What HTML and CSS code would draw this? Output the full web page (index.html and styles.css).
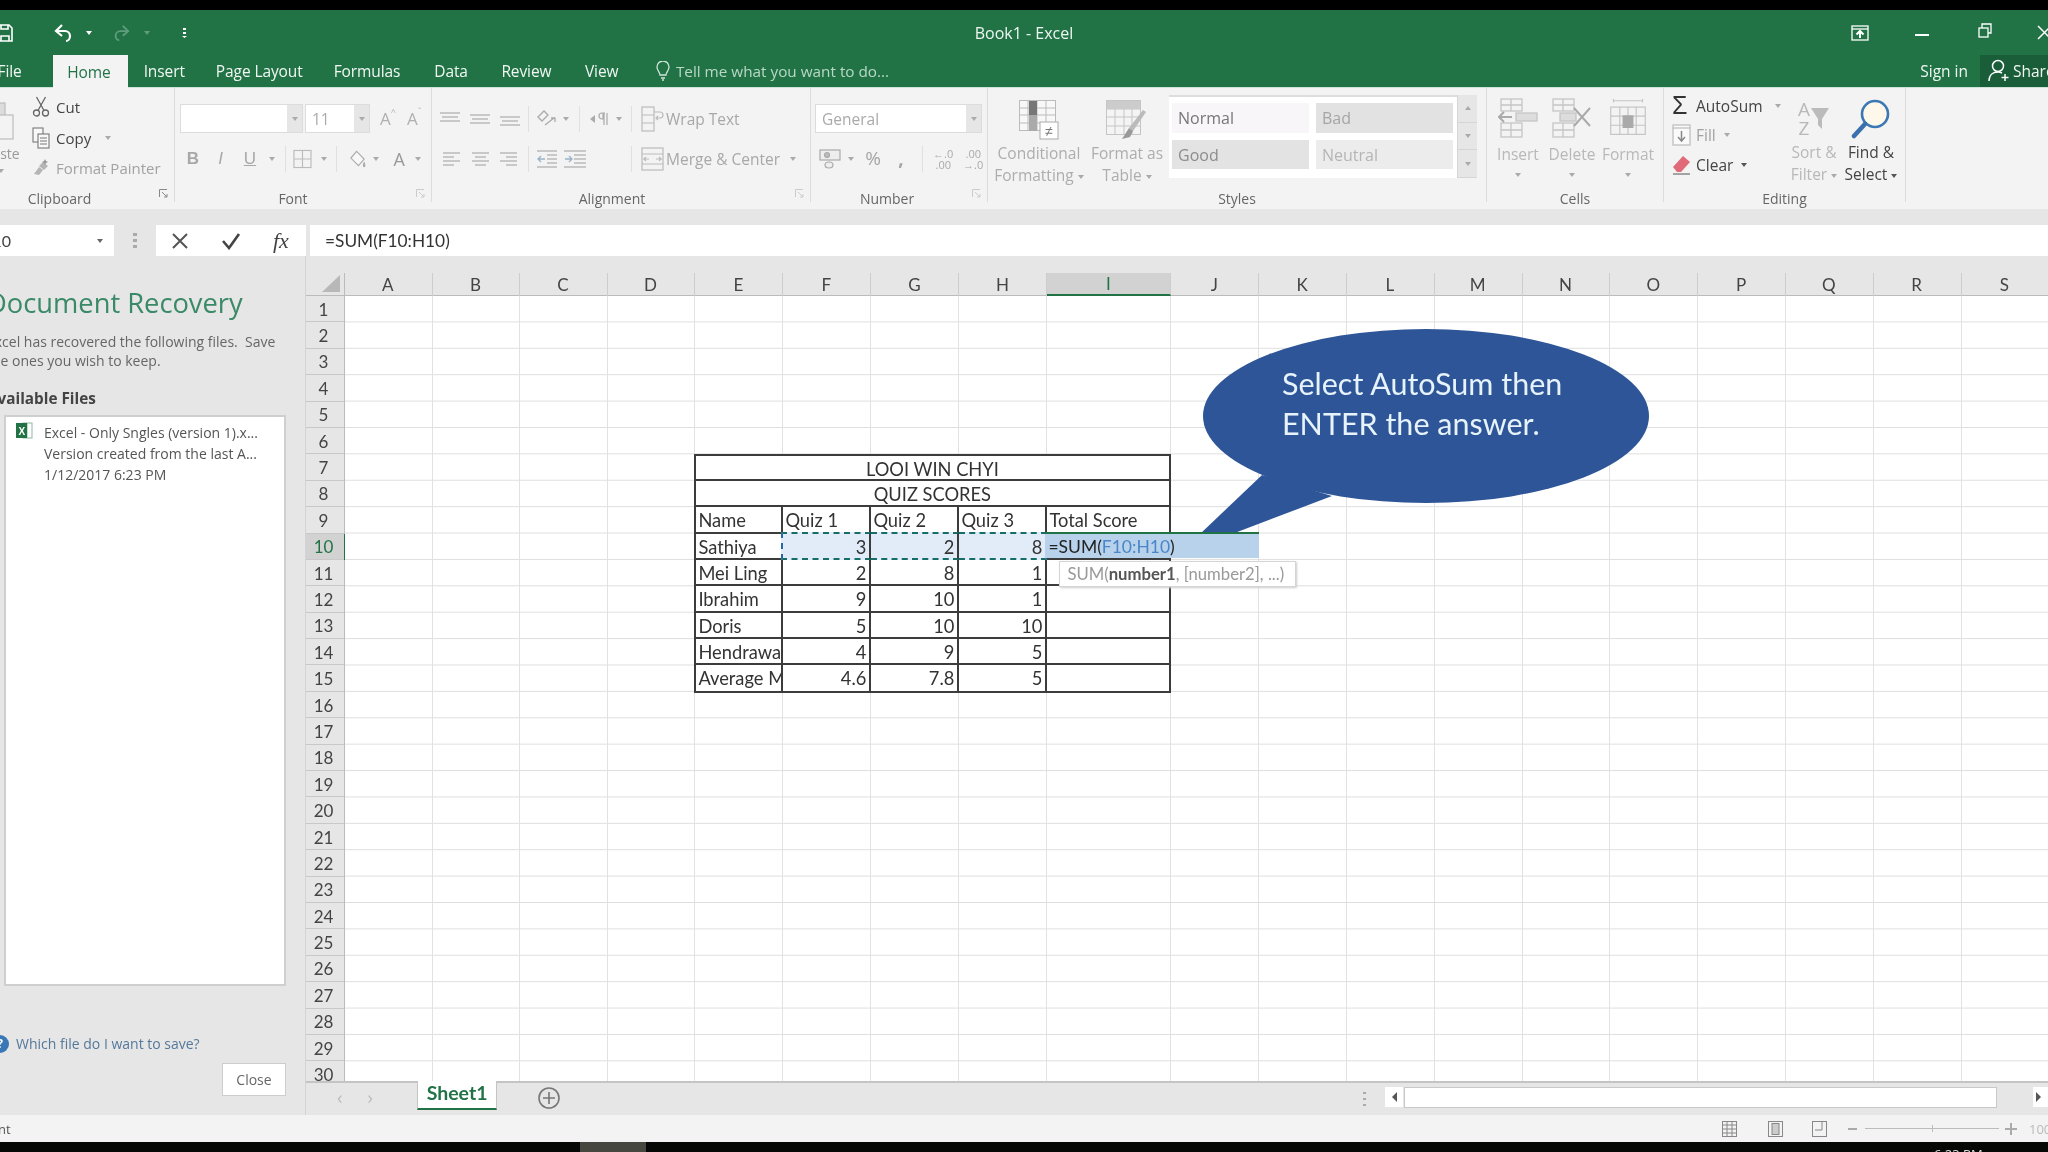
FILE: index.html
```html
<!DOCTYPE html>
<html lang="en">
<head>
<meta charset="utf-8">
<title>Book1 - Excel</title>
<link rel="stylesheet" href="styles.css">
</head>
<body>
<div class="app">
  <div class="black-top"></div>

  <header class="titlebar">
    <div class="qat">
      <svg class="q-save" width="16" height="18" viewBox="0 0 16 18" fill="none" stroke="#fff" stroke-width="1.6"><path d="M1 1h11l3 3v13H1z"/><path d="M4 17v-5h8v5" /><path d="M4 1v4h7V1"/></svg>
      <svg class="q-undo" width="20" height="20" viewBox="0 0 20 20" fill="none" stroke="#fff" stroke-width="2.2"><path d="M8 2 2 8l6 5"/><path d="M2 8h9a5 5 0 0 1 5 5c0 3-2 5-4 5"/></svg>
      <i class="caret white q-c1"></i>
      <svg class="q-redo" width="18" height="20" viewBox="0 0 20 20" fill="none" stroke="#5f9d7d" stroke-width="2"><path d="M12 2l6 6-6 5"/><path d="M18 8H9a5 5 0 0 0-5 5c0 3 2 5 4 5"/></svg>
      <i class="caret dim q-c2"></i>
      <svg class="q-more" width="6" height="10" viewBox="0 0 6 10" fill="#fff"><rect x="1" y="0" width="3" height="2"/><rect x="1" y="4" width="3" height="2"/><path d="M0 8h5l-2.500 2z"/></svg>
    </div>
    <div class="doc-title">Book1 - Excel</div>
    <div class="winctl">
      <svg class="w-ribbon" width="18" height="16" viewBox="0 0 18 16" fill="none" stroke="#fff" stroke-width="1.300"><rect x="1" y="1" width="16" height="14"/><path d="M1 4h16"/><path d="M9 13V6M5.500 9.500 9 6l3.500 3.500" stroke-width="2"/></svg>
      <span class="w-min"></span>
      <svg class="w-rest" width="14" height="15" viewBox="0 0 14 15" fill="none" stroke="#fff" stroke-width="1.300"><rect x="1" y="5" width="9" height="9"/><path d="M4 5V1h9v9h-3"/></svg>
      <svg class="w-close" width="15" height="15" viewBox="0 0 15 15" fill="none" stroke="#fff" stroke-width="1.500"><path d="M1 1l13 13M14 1 1 14"/></svg>
    </div>
  </header>

  <nav class="tabstrip">
    <span class="tab file">File</span>
    <span class="tab home">Home</span>
    <span class="tab">Insert</span>
    <span class="tab t-pl">Page Layout</span>
    <span class="tab t-fm">Formulas</span>
    <span class="tab t-dr">Data</span>
    <span class="tab t-dr">Review</span>
    <span class="tab">View</span>
    <span class="tell">
      <svg width="14" height="20" viewBox="0 0 14 20" fill="none" stroke="#cfe5d8" stroke-width="1.300"><path d="M4 14c0-3-3-4-3-8a6 6 0 0 1 12 0c0 4-3 5-3 8z"/><path d="M5 17h4M6 19h2"/></svg>
      Tell me what you want to do...
    </span>
    <span class="signin">Sign in</span>
    <span class="share">
      <svg width="22" height="24" viewBox="0 0 22 24" fill="none" stroke="#fff" stroke-width="1.500"><circle cx="10" cy="7" r="5.500"/><path d="M1 22c0-6 4-9 9-9 2 0 3 .5 4 1"/><path d="M17 15v7M13.500 18.500h7"/></svg>
      Share
    </span>
  </nav>

  <section class="ribbon">
    <div class="group g-clip">
      <div class="gbody clip-body">
        <div class="paste">
          <svg width="30" height="42" viewBox="0 0 30 42" fill="#f3f3f3" stroke="#bdbdbd" stroke-width="1.200"><rect x="1" y="4" width="20" height="28" fill="#dcdcdc"/><path d="M8 2h6v4H8z" fill="#c9c9c9"/><rect x="11" y="16" width="18" height="24"/></svg>
          <span class="paste-l">Paste</span>
          <i class="caret paste-c"></i>
        </div>
        <div class="clip-list">
          <div class="clip-row">
            <svg width="18" height="22" viewBox="0 0 18 22" fill="none" stroke="#666" stroke-width="1.300"><circle cx="4.500" cy="17" r="3"/><circle cx="13.500" cy="17" r="3"/><path d="M6 14.500 13.500 1M12 14.500 4.500 1"/></svg>
            <span class="t-dark">Cut</span>
          </div>
          <div class="clip-row">
            <svg width="18" height="22" viewBox="0 0 18 22" fill="#f8f8f8" stroke="#777" stroke-width="1.100"><rect x="1" y="1" width="10" height="14"/><rect x="6" y="7" width="11" height="14"/><path d="M8 11h7M8 14h7M8 17h7"/></svg>
            <span class="t-dark">Copy</span>
            <i class="caret copy-c"></i>
          </div>
          <div class="clip-row">
            <svg width="18" height="18" viewBox="0 0 18 18" fill="#b5b5b5"><path d="M11 3l5 4-4 4-5-4z"/><path d="M7 8l4 3-4 5-5-1z"/><path d="M13 0l1 2 2 1-2 1-1 2-1-2-2-1 2-1z" fill="#999"/></svg>
            <span class="t-dim">Format Painter</span>
          </div>
        </div>
      </div>
      <div class="glabel">Clipboard</div>
      <svg class="launch dark" width="9" height="9" viewBox="0 0 9 9" fill="none" stroke="#888"><path d="M.5 8V.5H8M3 3l5 5M8 5v3H5"/></svg>
    </div>

    <div class="group g-font">
      <div class="gbody">
        <div class="rrow first">
          <span class="combo c-font"><i class="combo-arrow"><i class="caret"></i></i></span>
          <span class="combo c-size"><span class="combo-val">11</span><i class="combo-arrow"><i class="caret"></i></i></span>
          <span class="bigA a1">A<sup>^</sup></span>
          <span class="bigA a2">A<sup>ˇ</sup></span>
        </div>
        <div class="rrow">
          <b class="fmt w26">B</b>
          <em class="fmt w29">I</em>
          <span class="fmt w30 under">U</span>
          <span class="cb w14"><i class="caret"></i></span>
          <i class="sep ml6"></i>
          <svg class="ml7" width="20" height="20" viewBox="0 0 20 20" fill="none" stroke="#bbb" stroke-width="1.200"><rect x="1" y="1" width="18" height="18"/><path d="M10 1v18M1 10h18"/></svg>
          <span class="cb w24"><i class="caret"></i></span>
          <i class="sep"></i>
          <svg class="ml12" width="18" height="20" viewBox="0 0 18 20" fill="#f8f8f8" stroke="#aaa" stroke-width="1.200"><path d="M8 2l8 8-6 7-8-8z"/><path d="M16 14c1 2 1 4 0 4s-1-2 0-4z" fill="#ccc"/></svg>
          <span class="cb w20"><i class="caret"></i></span>
          <span class="fontA w19">A</span>
          <span class="cb w26"><i class="caret"></i></span>
        </div>
      </div>
      <div class="glabel pad-launch">Font</div>
      <svg class="launch" width="9" height="9" viewBox="0 0 9 9" fill="none" stroke="#ccc"><path d="M.5 8V.5H8M3 3l5 5M8 5v3H5"/></svg>
    </div>

    <div class="group g-align">
      <div class="gbody">
        <div class="rrow first">
          <svg class="al" width="22" height="14" viewBox="0 0 22 14"><path d="M1 1h20M3 5h16M1 9h20" stroke="#bbb" stroke-width="1.500"/></svg>
          <svg class="al ml8" width="22" height="16" viewBox="0 0 22 16"><path d="M1 4h20M3 8h16M1 12h20" stroke="#bbb" stroke-width="1.500"/></svg>
          <svg class="al ml8" width="22" height="18" viewBox="0 0 22 18"><path d="M1 7h20M3 11h16M1 15h20" stroke="#bbb" stroke-width="1.500"/></svg>
          <i class="sep ml7"></i>
          <svg class="ml7" width="21" height="20" viewBox="0 0 21 20" fill="none" stroke="#aaa" stroke-width="1.300"><path d="M2 8l6-6 4 4-6 6zM9 16l9-7M15 9h4v4"/></svg>
          <span class="cb w18"><i class="caret"></i></span>
          <i class="sep ml4"></i>
          <svg class="ml9" width="22" height="14" viewBox="0 0 22 14" fill="#aaa"><path d="M1 7l5-4v8z"/><path d="M16 1h-3a3 3 0 0 0 0 6h1V1zM15 1v12M18 1v12" stroke="#aaa" stroke-width="1.200" fill="none"/></svg>
          <span class="cb w16"><i class="caret"></i></span>
          <i class="sep ml4"></i>
          <svg class="ml9" width="23" height="26" viewBox="0 0 23 26" fill="none" stroke="#bbb" stroke-width="1.200"><rect x="1" y="1" width="12" height="24"/><path d="M1 9h12M1 17h12M13 6h6a3 3 0 0 1 0 6h-4M17 10l-2 2 2 2"/></svg>
          <span class="t-mid ml2">Wrap Text</span>
        </div>
        <div class="rrow">
          <svg class="ml4" width="17" height="14" viewBox="0 0 17 14"><path d="M0 1h17M0 5h11M0 9h17M0 13h11" stroke="#bbb" stroke-width="1.400"/></svg>
          <svg class="ml12" width="17" height="14" viewBox="0 0 17 14"><path d="M0 1h17M3 5h11M0 9h17M3 13h11" stroke="#bbb" stroke-width="1.400"/></svg>
          <svg class="ml11" width="17" height="14" viewBox="0 0 17 14"><path d="M0 1h17M6 5h11M0 9h17M6 13h11" stroke="#bbb" stroke-width="1.400"/></svg>
          <i class="sep ml11"></i>
          <svg class="ml8" width="20" height="18" viewBox="0 0 20 18" fill="none"><path d="M0 1h20M10 5h10M10 9h10M10 13h10M0 17h20" stroke="#bbb" stroke-width="1.300"/><path d="M8 9H1M4 6 1 9l3 3" stroke="#9cb4c8" stroke-width="1.400"/></svg>
          <svg class="ml7" width="22" height="18" viewBox="0 0 22 18" fill="none"><path d="M0 1h22M10 5h12M10 9h12M10 13h12M0 17h22" stroke="#bbb" stroke-width="1.300"/><path d="M1 9h7M5 6l3 3-3 3" stroke="#9cb4c8" stroke-width="1.400"/></svg>
          <i class="sep ml45"></i>
          <svg class="ml9" width="23" height="24" viewBox="0 0 23 24" fill="none" stroke="#bbb" stroke-width="1.200"><rect x="1" y="1" width="21" height="22"/><path d="M1 7h21M1 17h21M8 12H2M15 12h6M5 10l-2 2 2 2M18 10l2 2-2 2"/></svg>
          <span class="t-mid ml2">Merge &amp; Center</span>
          <i class="caret ml10"></i>
        </div>
      </div>
      <div class="glabel pad-launch">Alignment</div>
      <svg class="launch" width="9" height="9" viewBox="0 0 9 9" fill="none" stroke="#ccc"><path d="M.5 8V.5H8M3 3l5 5M8 5v3H5"/></svg>
    </div>

    <div class="group g-num">
      <div class="gbody">
        <div class="rrow first">
          <span class="combo c-num"><span class="combo-val dim">General</span><i class="combo-arrow"><i class="caret"></i></i></span>
        </div>
        <div class="rrow">
          <svg class="ml8" width="22" height="22" viewBox="0 0 22 22" fill="#eee" stroke="#aaa" stroke-width="1.200"><rect x="1" y="2" width="20" height="10"/><circle cx="8" cy="7" r="2.500" fill="#bbb"/><ellipse cx="10" cy="17" rx="4" ry="3"/></svg>
          <span class="cb w20"><i class="caret"></i></span>
          <span class="sym ml2 w20">%</span>
          <span class="sym w36 bold">,</span>
          <i class="sep ml3"></i>
          <span class="dec ml10"><span>←.0</span><span>.00</span></span>
          <span class="dec ml12"><span>.00</span><span>→.0</span></span>
        </div>
      </div>
      <div class="glabel pad-launch2">Number</div>
      <svg class="launch" width="9" height="9" viewBox="0 0 9 9" fill="none" stroke="#ccc"><path d="M.5 8V.5H8M3 3l5 5M8 5v3H5"/></svg>
    </div>

    <div class="group g-styles">
      <div class="gbody styles-body">
        <div class="big w96">
          <svg width="40" height="40" viewBox="0 0 40 40" fill="none" stroke="#bbb"><rect x=".5" y=".5" width="36" height="30" fill="#f8f8f8"/><path d="M9 .5v30M18 .5v30M27 .5v30M.5 8h36M.5 15h36M.5 23h36"/><rect x="10" y="1" width="8" height="14" fill="#777" stroke="none"/><rect x="10" y="15" width="8" height="16" fill="#aaa" stroke="none"/><rect x="21" y="22" width="18" height="17" fill="#fff" stroke="#aaa"/><text x="30" y="36" class="ne">≠</text></svg>
          <span class="t-dim2">Conditional</span>
          <span class="t-dim2">Formatting <i class="caret"></i></span>
        </div>
        <div class="big w80">
          <svg width="42" height="40" viewBox="0 0 42 40" fill="none" stroke="#c5c5c5"><rect x=".5" y=".5" width="34" height="34" fill="#f4f4f4"/><path d="M9 .5v34M18 .5v34M26 .5v34M.5 9h34M.5 17h34M.5 26h34"/><rect x="1" y="1" width="33" height="8" fill="#ccc" stroke="none"/><path d="M40 12 27 31l-4-3L37 10z" fill="#bbb" stroke="none"/><path d="M23 28l4 3-3 6-8 2z" fill="#999" stroke="none"/></svg>
          <span class="t-dim2">Format as</span>
          <span class="t-dim2">Table <i class="caret"></i></span>
        </div>
        <div class="gallery">
          <div class="gal-grid">
            <span class="st st-normal">Normal</span>
            <span class="st st-bad">Bad</span>
            <span class="st st-good">Good</span>
            <span class="st st-neutral">Neutral</span>
          </div>
          <div class="gal-scroll">
            <span><i class="caret up"></i></span>
            <span><i class="caret"></i></span>
            <span><i class="caret"></i></span>
          </div>
        </div>
      </div>
      <div class="glabel">Styles</div>
    </div>

    <div class="group g-cells">
      <div class="gbody cells-body">
        <div class="big cell-btn w58">
          <svg width="40" height="40" viewBox="0 0 40 40" fill="none" stroke="#c5c5c5" stroke-width="1.300"><rect x="3" y="1" width="21" height="12"/><path d="M13 1v12M3 7h21"/><rect x="3" y="25" width="21" height="14"/><path d="M13 25v14M3 32h21"/><rect x="18" y="15" width="21" height="8" fill="#ddd"/><path d="M14 19H1M6 14 1 19l5 5" stroke="#aaa" stroke-width="2"/></svg>
          <span class="t-dim3">Insert</span>
          <i class="caret big-c"></i>
        </div>
        <div class="big cell-btn w50">
          <svg width="40" height="40" viewBox="0 0 40 40" fill="none" stroke="#c5c5c5" stroke-width="1.300"><rect x="1" y="1" width="21" height="12"/><path d="M11 1v12M1 7h21"/><rect x="1" y="25" width="21" height="14"/><path d="M11 25v14M1 32h21"/><rect x="8" y="15" width="16" height="8" fill="#ddd"/><path d="M22 10l16 18M38 10 22 28" stroke="#aaa" stroke-width="2"/></svg>
          <span class="t-dim3">Delete</span>
          <i class="caret big-c"></i>
        </div>
        <div class="big cell-btn w62">
          <svg width="40" height="40" viewBox="0 0 40 44" fill="none" stroke="#c5c5c5" stroke-width="1.300"><rect x="1" y="10" width="38" height="30"/><path d="M11 10v30M20 10v30M29 10v30M1 20h38M1 30h38M4 3h32M4 1v4M36 1v4"/><rect x="14" y="19" width="12" height="14" fill="#aaa" stroke="none"/></svg>
          <span class="t-dim3">Format</span>
          <i class="caret big-c"></i>
        </div>
      </div>
      <div class="glabel">Cells</div>
    </div>

    <div class="group g-edit">
      <div class="gbody edit-body">
        <div class="edit-list">
          <div class="edit-row"><span class="sigma">Σ</span><span class="t-dark ed-t">AutoSum</span><i class="caret c-auto"></i></div>
          <div class="edit-row">
            <svg width="19" height="22" viewBox="0 0 19 22" fill="#fafafa" stroke="#bbb" stroke-width="1.200"><rect x="1" y="1" width="17" height="20"/><path d="M1 4h17"/><path d="M9.500 7v10M6 13l3.500 4 3.500-4" stroke="#888" stroke-width="1.500" fill="none"/></svg>
            <span class="t-dim ed-t2">Fill</span><i class="caret c-fill"></i>
          </div>
          <div class="edit-row">
            <svg width="19" height="20" viewBox="0 0 19 20"><path d="M1 12 11 1l7 6-9 10H5z" fill="#e06a78"/><path d="M1 19h17" stroke="#777" stroke-width="1.300"/></svg>
            <span class="t-dark ed-t2">Clear</span><i class="caret c-clear"></i>
          </div>
        </div>
        <div class="big w56 sort">
          <span class="sort-ic"><span class="az">A<br>Z</span><svg width="20" height="24" viewBox="0 0 20 24" fill="#bbb"><path d="M1 1h18l-7 11v10l-4-4v-6z"/></svg></span>
          <span class="t-dim3">Sort &amp;</span>
          <span class="t-dim3">Filter <i class="caret"></i></span>
        </div>
        <div class="big w58 find">
          <svg width="42" height="40" viewBox="0 0 42 40" fill="none"><circle cx="25" cy="15" r="13" fill="#fdf8ea" stroke="#3c78b4" stroke-width="2.600"/><path d="M15 25 4 37" stroke="#3a70ad" stroke-width="4.500" stroke-linecap="round"/></svg>
          <span class="t-dark">Find &amp;</span>
          <span class="t-dark">Select <i class="caret"></i></span>
        </div>
      </div>
      <div class="glabel">Editing</div>
    </div>
  </section>

  <section class="formulabar">
    <div class="namebox"><span class="nb-val">I10</span><i class="caret nb-c"></i></div>
    <svg class="fb-dots" width="4" height="16" viewBox="0 0 4 16" fill="#aaa"><rect width="4" height="3"/><rect y="6" width="4" height="3"/><rect y="12" width="4" height="3"/></svg>
    <div class="fb-btns">
      <svg width="18" height="18" viewBox="0 0 18 18" fill="none" stroke="#555" stroke-width="2"><path d="M2 2l14 14M16 2 2 16"/></svg>
      <svg width="20" height="18" viewBox="0 0 20 18" fill="none" stroke="#444" stroke-width="2.600"><path d="M2 9l6 7L18 2"/></svg>
      <span class="fx">fx</span>
    </div>
    <div class="fb-input">=SUM(F10:H10)</div>
  </section>

  <main class="main">
    <aside class="panel">
      <h2 class="p-title">Document Recovery</h2>
      <p class="p-desc">Excel has recovered the following files.  Save<br>the ones you wish to keep.</p>
      <h3 class="p-avail">Available Files</h3>
      <div class="p-list">
        <svg width="17" height="17" viewBox="0 0 17 17"><rect x="7" y="1" width="9" height="15" fill="#fff" stroke="#8fb9a3"/><path d="M11 1v15" stroke="#8fb9a3"/><rect x="0" y="1" width="11" height="15" fill="#217346"/><text x="2.500" y="12.500" class="xl">X</text></svg>
        <div class="p-file">
          <span>Excel - Only Sngles (version 1).x...</span>
          <span>Version created from the last A...</span>
          <span>1/12/2017 6:23 PM</span>
        </div>
      </div>
      <div class="p-help"><span class="help-ic">?</span><span>Which file do I want to save?</span></div>
      <button class="p-close">Close</button>
    </aside>

    <section class="sheet">
      <div class="colhead">
        <div class="corner"><svg width="18" height="17" viewBox="0 0 18 17" fill="#b8b8b8"><path d="M18 0v17H0z"/></svg></div>
        <div class="cols">
          <span>A</span><span>B</span><span>C</span><span>D</span><span>E</span><span>F</span><span>G</span><span>H</span><span class="sel">I</span><span>J</span><span>K</span><span>L</span><span>M</span><span>N</span><span>O</span><span>P</span><span>Q</span><span>R</span><span>S</span>
        </div>
      </div>
      <div class="gridwrap">
        <div class="rowhead">
          <span>1</span><span>2</span><span>3</span><span>4</span><span>5</span><span>6</span><span>7</span><span>8</span><span>9</span><span class="sel">10</span><span>11</span><span>12</span><span>13</span><span>14</span><span>15</span><span>16</span><span>17</span><span>18</span><span>19</span><span>20</span><span>21</span><span>22</span><span>23</span><span>24</span><span>25</span><span>26</span><span>27</span><span>28</span><span>29</span><span>30</span>
        </div>
        <div class="cells">
          <div class="vlines"><i></i><i></i><i></i><i></i><i></i><i></i><i></i><i></i><i></i><i></i><i></i><i></i><i></i><i></i><i></i><i></i><i></i><i></i><i></i></div>
          <div class="data">
            <div class="c merged">LOOI WIN CHYI</div>
            <div class="c merged">QUIZ SCORES</div>
            <div class="c">Name</div><div class="c">Quiz 1</div><div class="c">Quiz 2</div><div class="c">Quiz 3</div><div class="c">Total Score</div>
            <div class="c">Sathiya</div><div class="c n ant al-l">3</div><div class="c n ant">2</div><div class="c n ant al-r">8</div>
            <div class="c active">
              <div class="edit">=SUM(<span class="ref">F10:H10</span>)</div>
              <div class="tip">SUM(<b>number1</b>, [number2], ...)</div>
            </div>
            <div class="c">Mei Ling</div><div class="c n">2</div><div class="c n">8</div><div class="c n">1</div><div class="c"></div>
            <div class="c">Ibrahim</div><div class="c n">9</div><div class="c n">10</div><div class="c n">1</div><div class="c"></div>
            <div class="c">Doris</div><div class="c n">5</div><div class="c n">10</div><div class="c n">10</div><div class="c"></div>
            <div class="c clip">Hendrawati</div><div class="c n">4</div><div class="c n">9</div><div class="c n">5</div><div class="c"></div>
            <div class="c clip">Average Mark</div><div class="c n">4.6</div><div class="c n">7.8</div><div class="c n">5</div><div class="c"></div>
          </div>
          <div class="callout">
            <svg width="450" height="205" viewBox="0 0 450 205"><ellipse cx="226" cy="87" rx="223" ry="87" fill="#2e5597"/><path d="M62 146 0 205h32l100-38z" fill="#2e5597"/></svg>
            <div class="callout-text">Select AutoSum then<br>ENTER the answer.</div>
          </div>
        </div>
      </div>
      <div class="sheettabs">
        <span class="nav">‹</span><span class="nav n2">›</span>
        <span class="sheet1">Sheet1</span>
        <svg class="addsheet" width="22" height="22" viewBox="0 0 22 22" fill="none" stroke="#777" stroke-width="1.600"><circle cx="11" cy="11" r="10"/><path d="M11 5v12M5 11h12"/></svg>
        <svg class="tdots" width="3" height="14" viewBox="0 0 3 14" fill="#aaa"><rect width="3" height="2"/><rect y="6" width="3" height="2"/><rect y="12" width="3" height="2"/></svg>
        <span class="sb-btn"><i class="tri-l"></i></span>
        <span class="sb-track"></span>
        <span class="sb-btn right"><i class="tri-r"></i></span>
      </div>
    </section>
  </main>

  <footer class="status">
    <span class="st-mode">Point</span>
    <svg class="s1" width="15" height="16" viewBox="0 0 15 16" fill="none" stroke="#888"><rect x=".5" y=".5" width="14" height="15"/><path d="M5 .5v15M10 .5v15M.5 4h14M.5 8h14M.5 12h14"/></svg>
    <svg class="s2" width="15" height="16" viewBox="0 0 15 16" fill="none" stroke="#888"><rect x=".5" y=".5" width="14" height="15"/><rect x="4" y="2.500" width="7" height="11" fill="#ccc"/></svg>
    <svg class="s3" width="15" height="16" viewBox="0 0 15 16" fill="none" stroke="#888"><rect x=".5" y=".5" width="14" height="15"/><path d="M10 .5V9H3"/></svg>
    <i class="z-minus"></i>
    <i class="z-track"><i class="z-tick"></i></i>
    <i class="z-plus"></i>
    <span class="z-val">100%</span>
  </footer>

  <div class="black-bot"><span class="tb-item"></span><span class="tb-time">6:23 PM</span></div>
</div>
</body>
</html>
```

FILE: styles.css
```css
* { box-sizing: border-box; }
html, body { margin: 0; padding: 0; width: 2048px; height: 1152px; overflow: hidden; background: #000; }
body { font-family: "Open Sans", "Noto Sans", sans-serif; color: #444; }
.app { width: 2048px; height: 1152px; display: flex; flex-direction: column; overflow: hidden; filter: blur(.35px); }
.black-top { height: 10px; background: #000; flex: none; }

/* carets */
.caret { display: inline-block; width: 0; height: 0; border-left: 3px solid transparent; border-right: 3px solid transparent; border-top: 4px solid #aaa; vertical-align: middle; flex: none; }
.caret.white { border-top-color: #fff; }
.caret.dim { border-top-color: #5f9d7d; }
.caret.up { border-top: 0; border-bottom: 4px solid #aaa; }

/* title */
.titlebar { height: 45px; flex: none; background: #217346; display: flex; align-items: center; color: #fff; }
.qat { flex: 1 1 0; min-width: 0; display: flex; align-items: center; }
.q-save { margin-left: -3px; flex: none; }
.q-undo { margin-left: 41px; flex: none; }
.q-c1 { margin-left: 12px; }
.q-redo { margin-left: 20px; flex: none; }
.q-c2 { margin-left: 14px; }
.q-more { margin-left: 32px; flex: none; }
.doc-title { font-size: 16px; color: #eef6f1; flex: none; }
.winctl { flex: 1 1 0; min-width: 0; display: flex; align-items: center; height: 100%; }
.winctl svg, .winctl span { flex: none; }
.w-ribbon { margin-left: 778px; }
.w-min { width: 14px; height: 2px; background: #fff; margin-left: 46px; margin-top: 4px; }
.w-rest { margin-left: 49px; margin-top: -4px; }
.w-close { margin-left: 45px; }

/* tabs */
.tabstrip { height: 33px; flex: none; background: #217346; display: flex; align-items: stretch; color: #f0f7f3; font-size: 15.500px; position: relative; border-bottom: 1px solid #cfe3d8; }
.tab { padding: 0 15.500px; display: flex; align-items: center; letter-spacing: -.1px; flex: none; }
.tab.file { margin-left: -18px; margin-right: 16px; }
.tab.home { background: #f3f3f3; color: #217346; padding: 0 14px; width: 75px; margin-bottom: -1px; }
.tab.t-fm { padding-right: 18.500px; }
.tab.t-dr { padding-right: 18px; }
.tell { display: flex; align-items: center; gap: 6px; margin-left: 22px; color: #b9d8c6; font-size: 15.300px; white-space: nowrap; }
.signin { margin-left: auto; display: flex; align-items: center; padding-right: 12px; }
.share { width: 68px; background: #1a5d39; display: flex; align-items: center; gap: 3px; padding-left: 8px; white-space: nowrap; overflow: hidden; flex: none; }
.share svg { flex: none; }

/* ribbon */
.ribbon { height: 121px; flex: none; background: #f3f3f3; display: flex; font-size: 15.500px; }
.group { position: relative; display: flex; flex-direction: column; flex: none; border-right: 1px solid #dcdcdc; margin-bottom: 7px; height: 114px; }
.gbody { height: 99px; flex: none; }
.glabel { font-size: 14px; text-align: center; color: #666; line-height: 18px; margin-top: 3px; }
.pad-launch { padding-right: 25px; }
.pad-launch2 { padding-right: 24px; }
.launch { position: absolute; right: 6px; bottom: 4px; }
.g-clip { width: 230px; margin-left: -55px; }
.g-font { width: 257px; padding-left: 5px; }
.g-align { width: 379px; padding-left: 7px; }
.g-num { width: 177px; padding-left: 0; }
.g-styles { width: 499px; }
.g-cells { width: 177px; }
.g-edit { width: 242px; }

.clip-body { display: flex; }
.paste { width: 87px; padding: 11px 0 0 39px; display: flex; flex-direction: column; flex: none; color: #999; }
.paste-l { margin-top: 3px; font-size: 14px; white-space: nowrap; }
.paste-c { margin: 6px 0 0 14px; }
.clip-list { display: flex; flex-direction: column; padding-top: 4px; font-size: 15px; }
.clip-row { height: 30.500px; display: flex; align-items: center; gap: 6px; white-space: nowrap; }
.clip-row svg { flex: none; }
.clip-row .copy-c { margin-left: 8px; }
.t-dark { color: #444; }
.t-dim { color: #a2a2a2; }
.t-mid { color: #a8a8a8; white-space: nowrap; }
.t-dim2 { color: #adadad; line-height: 22px; white-space: nowrap; }
.t-dim3 { color: #b8b8b8; line-height: 22px; white-space: nowrap; }

.rrow { height: 29px; display: flex; align-items: center; margin-top: 11px; white-space: nowrap; }
.rrow.first { margin-top: 16px; }
.combo { height: 29px; background: #fff; border: 1px solid #dcdcdc; display: flex; align-items: center; position: relative; flex: none; }
.combo-val { padding-left: 6px; color: #aaa; font-size: 15.500px; }
.combo-arrow { position: absolute; right: 0; top: 0; bottom: 0; width: 15px; background: #e6e6e6; display: flex; align-items: center; justify-content: center; }
.c-font { width: 123px; }
.c-size { width: 65px; margin-left: 2px; }
.c-num { width: 167px; margin-left: 4px; }
.bigA { color: #b0b0b0; font-size: 17px; flex: none; display: inline-flex; }
.bigA sup { font-size: 9px; line-height: 1; }
.a1 { margin-left: 10px; width: 27px; }
.a2 { width: 20px; }
.fmt { color: #a8a8a8; text-align: center; flex: none; font-size: 17px; font-family: "Liberation Sans", sans-serif; }
.under { text-decoration: underline; }
.fontA { color: #999; font-size: 18px; text-align: right; flex: none; }
.cb { display: inline-flex; justify-content: center; flex: none; }
.sep { display: block; width: 1px; height: 26px; background: #e0e0e0; flex: none; }
.w14 { width: 14px; } .w16 { width: 16px; } .w18 { width: 18px; } .w19 { width: 19px; } .w20 { width: 20px; } .w24 { width: 24px; } .w26 { width: 26px; } .w29 { width: 29px; } .w30 { width: 30px; } .w36 { width: 36px; }
.ml2 { margin-left: 2px; } .ml3 { margin-left: 3px; } .ml4 { margin-left: 4px; } .ml6 { margin-left: 6px; } .ml7 { margin-left: 7px; } .ml8 { margin-left: 8px; } .ml9 { margin-left: 9px; } .ml10 { margin-left: 10px; } .ml11 { margin-left: 11px; } .ml12 { margin-left: 12px; } .ml45 { margin-left: 45px; }
.al { flex: none; }
.sym { color: #a5a5a5; font-size: 19px; text-align: center; flex: none; line-height: 1; }
.bold { font-weight: 700; }
.dec { display: inline-flex; flex-direction: column; width: 18px; font-size: 11px; line-height: 11px; color: #aaa; text-align: right; flex: none; white-space: nowrap; }
.dim { color: #aaa; }

.big { display: flex; flex-direction: column; align-items: center; flex: none; }
.big svg { flex: none; }
.styles-body { display: flex; padding: 12px 0 0 3px; }
.w96 { width: 96px; } .w80 { width: 80px; } .w58 { width: 58px; } .w50 { width: 50px; } .w62 { width: 62px; } .w56 { width: 56px; }
.big > svg { margin-bottom: 2px; }
.ne { font-size: 14px; text-anchor: middle; fill: #777; stroke: none; font-family: "Liberation Sans", sans-serif; }
.gallery { display: flex; margin: -5px 0 0 2px; height: 83px; width: 308px; flex: none; }
.gal-grid { width: 288px; background: #fff; display: grid; grid-template-columns: 137px 137px; grid-template-rows: 30px 29px; gap: 7px; padding: 6px 0 0 3px; border-top: 2px solid #ddd; }
.st { display: flex; align-items: center; padding-left: 6px; font-size: 16px; min-width: 0; }
.st-normal { background: #f8f6f8; color: #777; }
.st-bad { background: #e2e2e2; color: #a5a5a5; }
.st-good { background: #e3e3e3; color: #8c8c8c; }
.st-neutral { background: #ececec; color: #b5b5b5; }
.gal-scroll { width: 20px; display: flex; flex-direction: column; background: #e6e6e6; border-left: 1px solid #d5d5d5; }
.gal-scroll span { flex: 1; display: flex; align-items: center; justify-content: center; border-bottom: 1px solid #d5d5d5; }
.cells-body { display: flex; padding: 10px 0 0 2px; }
.cell-btn .t-dim3 { margin-top: 3px; }
.big-c { margin-top: 8px; }
.edit-body { display: flex; padding: 3px 0 0 8px; }
.edit-list { width: 114px; flex: none; }
.edit-row { height: 29.500px; display: flex; align-items: center; white-space: nowrap; position: relative; }
.edit-row svg { flex: none; }
.sigma { font-size: 25px; width: 24px; color: #333; line-height: 1; font-family: "Liberation Sans", sans-serif; }
.ed-t2 { margin-left: 5px; }
.c-auto { margin-left: 12px; }
.c-fill { margin-left: 8px; }
.c-clear { margin-left: 8px; border-top-color: #555; }
.sort, .find { padding-top: 8px; }
.sort-ic { display: flex; align-items: center; height: 40px; margin-bottom: 2px; }
.az { color: #b8b8b8; font-size: 19px; line-height: 19px; text-align: center; }
.find .t-dark { line-height: 22px; white-space: nowrap; }
.find .caret { border-top-color: #555; }

/* formula bar */
.formulabar { height: 47px; flex: none; background: #e6e6e6; display: flex; align-items: flex-start; padding-top: 16px; }
.namebox { width: 114px; height: 31px; background: #fff; position: relative; overflow: hidden; display: flex; align-items: center; flex: none; }
.nb-val { margin-left: -12px; font-size: 16px; font-family: Lato, sans-serif; color: #444; }
.nb-c { position: absolute; left: 97px; top: 14px; border-top-color: #666; }
.fb-dots { margin: 8px 0 0 19px; flex: none; }
.fb-btns { width: 150px; height: 31px; margin-left: 19px; background: #fff; display: flex; align-items: center; padding-left: 15px; flex: none; }
.fb-btns svg:nth-child(2) { margin-left: 32px; }
.fx { margin-left: 32px; font-family: "Liberation Serif", serif; font-style: italic; font-size: 22px; color: #444; }
.fb-input { flex: 1; height: 31px; margin-left: 4px; background: #fff; padding-left: 15px; display: flex; align-items: center; font-family: Lato, sans-serif; font-size: 17.300px; color: #333; }

/* main */
.main { height: 859px; flex: none; display: flex; background: #e6e6e6; }
.panel { width: 305px; flex: none; display: flex; flex-direction: column; }
.p-title { margin: 27px 0 0 -13px; font-weight: 400; font-size: 27.300px; line-height: 40px; color: #3a8a68; white-space: nowrap; }
.p-desc { margin: 9px 0 0 -13px; font-size: 14px; line-height: 19px; color: #666; white-space: pre-wrap; }
.p-avail { margin: 18px 0 0 -13px; font-size: 15.300px; line-height: 20px; color: #444; font-weight: 700; white-space: nowrap; }
.p-list { margin: 7px 0 0 4px; width: 282px; height: 571px; background: #fff; border: 2px solid #cfcfcf; display: flex; padding: 5px 0 0 10px; gap: 11px; }
.p-list svg { flex: none; }
.xl { font-size: 10px; font-weight: 700; fill: #fff; font-family: "Liberation Sans", sans-serif; }
.p-file { display: flex; flex-direction: column; font-size: 14px; line-height: 21px; color: #555; white-space: nowrap; }
.p-help { margin: 48px 0 0 -9px; display: flex; align-items: center; gap: 7px; font-size: 14px; line-height: 20px; color: #55789a; white-space: nowrap; }
.help-ic { width: 18px; height: 18px; border-radius: 50%; background: #3a78b5; color: #fff; display: flex; align-items: center; justify-content: center; font-size: 12px; font-weight: 700; flex: none; }
.p-close { margin: 9px 19px 0 0; align-self: flex-end; width: 64px; height: 33px; background: #fff; border: 1px solid #cdcdcd; font: 14px "Open Sans", sans-serif; color: #666; padding: 0; }

/* sheet */
.sheet { width: 1743px; flex: none; display: flex; flex-direction: column; border-left: 1px solid #d4d4d4; }
.colhead { height: 40px; flex: none; display: flex; padding-top: 17px; background: #e6e6e6; }
.corner { width: 39px; flex: none; display: flex; align-items: flex-end; padding: 0 0 3px 16px; border-bottom: 1px solid #bbb; border-right: 1px solid #bbb; }
.cols { display: grid; grid-template-columns: repeat(4, 87.6px) repeat(4, 88px) 124px repeat(10, 87.8px); flex: none; border-bottom: 1px solid #bbb; }
.cols span { display: flex; align-items: center; justify-content: center; font: 17px Lato, sans-serif; color: #444; border-right: 1px solid #cdcdcd; padding-right: 1px; }
.cols .sel { background: #d2d2d2; color: #217346; border-bottom: 2px solid #217346; height: 23px; }
.gridwrap { display: flex; height: 785px; overflow: hidden; flex: none; }
.rowhead { width: 39px; flex: none; display: grid; grid-template-rows: repeat(30, 26.400px); background: #e6e6e6; border-right: 1px solid #bbb; height: 792px; }
.rowhead span { display: flex; align-items: center; justify-content: center; font: 17px Lato, sans-serif; color: #444; border-bottom: 1px solid #c8c8c8; padding: 1px 3px 0 0; }
.rowhead .sel { background: #d2d2d2; color: #217346; box-shadow: 2px 0 0 #217346; }
.cells { flex: 1; position: relative; display: grid; grid-template-columns: repeat(4, 87.6px) repeat(4, 88px) 124px repeat(10, 87.8px); grid-template-rows: repeat(30, 26.400px); height: 792px; background-color: #fff; background-image: linear-gradient(to bottom, transparent calc(100% - 1px), #dedede 0); background-size: 100% 26.400px; }
.vlines { grid-area: 1 / 1 / -1 / -1; display: grid; grid-template-columns: subgrid; }
.vlines i { border-right: 1px solid #e2e2e2; }
.data { grid-area: 7 / 5 / 16 / 10; display: grid; grid-template-columns: subgrid; grid-template-rows: subgrid; position: relative; z-index: 3; border-top: 2px solid #3c3c3c; border-left: 2px solid #3c3c3c; margin: 0 0 -1px -1px; }
.c { background: #fff; border-right: 2px solid #3c3c3c; border-bottom: 2px solid #3c3c3c; font: 18.300px/27px Lato, sans-serif; color: #333; padding: 0 3px 0 2px; white-space: nowrap; position: relative; }
.c.n { text-align: right; padding-right: 3px; }
.clip { overflow: hidden; padding-right: 0; }
.merged { grid-column: 1 / -1; text-align: center; }
.ant { background: #e2ebf8; border-bottom: 2px dashed #156e68; border-top: 2px dashed #156e68; margin-top: -2px; z-index: 1; line-height: 26px; }
.al-l { border-left: 2px dashed #2467ad; margin-left: -2px; }
.al-r { border-right: 2px dashed #2467ad; }
.active { overflow: visible; }
.edit { position: absolute; left: -2px; top: -2px; width: 214px; height: 26px; background: #b8d2ec; padding-left: 3px; font-size: 17.500px; line-height: 26px; border-top: 2px solid #217346; color: #222; z-index: 2; }
.ref { color: #4a86c8; }
.tip { position: absolute; left: 12px; top: 27px; height: 26px; width: 237px; background: #fff; border: 1px solid #d5d5d5; box-shadow: 1px 1px 2px #ccc; font: 16.700px/24px Lato, sans-serif; color: #999; padding-left: 7px; z-index: 4; }
.tip b { color: #555; }
.callout { position: absolute; left: 855px; top: 33px; width: 450px; height: 205px; z-index: 2; }
.callout-text { position: absolute; left: 82px; top: 34px; font: 30.500px/40px Lato, sans-serif; color: #e6f3fb; white-space: nowrap; }

/* tabs row */
.sheettabs { height: 34px; flex: none; background: #e6e6e6; border-top: 2px solid #c4c4c4; display: flex; align-items: flex-start; color: #bbb; position: relative; }
.nav { margin: 4px 0 0 31px; font-size: 18px; width: 6px; line-height: 20px; }
.nav.n2 { margin-left: 25px; }
.sheet1 { margin: -2px 0 0 44px; width: 86px; height: 29px; background: #fff; color: #217346; font: 700 19.500px/24px Lato, sans-serif; text-align: center; border-bottom: 2px solid #217346; border-right: 1px solid #c4c4c4; border-left: 1px solid #c4c4c4; }
.addsheet { margin: 4px 0 0 41px; flex: none; }
.tdots { margin: 9px 0 0 803px; flex: none; }
.sb-btn { width: 18px; height: 20px; margin: 4px 0 0 19px; background: #fff; display: flex; align-items: center; justify-content: center; flex: none; }
.sb-btn.right { width: 15px; margin-left: 36px; justify-content: flex-start; padding-left: 3px; }
.tri-l { border-top: 5px solid transparent; border-bottom: 5px solid transparent; border-right: 5px solid #555; }
.tri-r { border-top: 5px solid transparent; border-bottom: 5px solid transparent; border-left: 5px solid #555; }
.sb-track { width: 593px; height: 21px; margin-top: 4px; margin-left: 1px; background: #fff; border: 1px solid #c8c8c8; flex: none; }

/* status */
.status { height: 27px; flex: none; background: #f3f3f3; display: flex; align-items: center; }
.st-mode { margin-left: -21px; font-size: 13px; color: #555; width: 29px; flex: none; }
.status svg { flex: none; }
.s1 { margin-left: 1714px; }
.s2 { margin-left: 31px; }
.s3 { margin-left: 29px; }
.z-minus { width: 9px; height: 2px; background: #aaa; margin-left: 21px; flex: none; }
.z-track { width: 134px; height: 1px; background: #bbb; margin-left: 8px; flex: none; position: relative; }
.z-tick { position: absolute; left: 67px; top: -3px; width: 1px; height: 7px; background: #bbb; }
.z-plus { width: 12px; height: 12px; margin-left: 6px; flex: none; background: linear-gradient(#aaa, #aaa) center / 100% 2px no-repeat, linear-gradient(#aaa, #aaa) center / 2px 100% no-repeat; }
.z-val { margin-left: 12px; font-size: 13px; color: #bbb; white-space: nowrap; }

.black-bot { height: 10px; flex: none; background: #050805; position: relative; display: flex; overflow: hidden; }
.tb-item { width: 66px; margin-left: 580px; background: #46483f; flex: none; }
.tb-time { margin: 3px 0 0 1288px; font-size: 13px; line-height: 18px; color: #ddd; white-space: nowrap; }
```
